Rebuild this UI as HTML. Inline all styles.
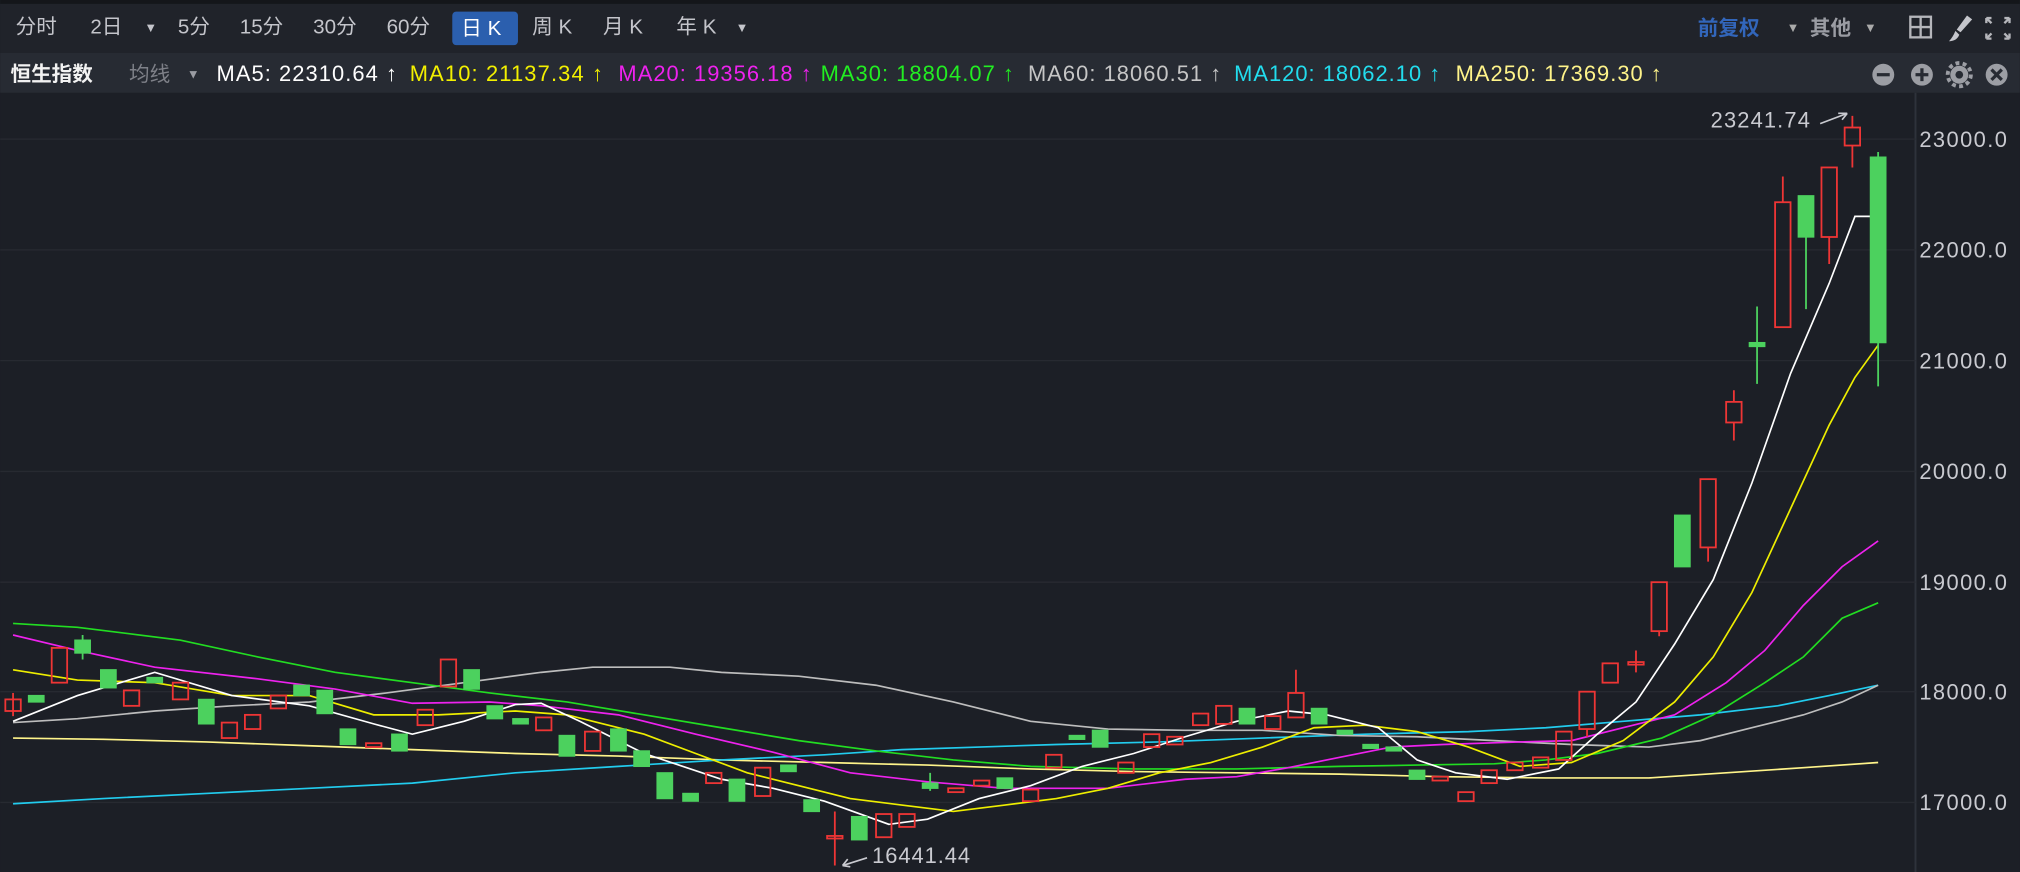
<!DOCTYPE html>
<html><head><meta charset="utf-8"><style>
html,body{margin:0;padding:0;background:#1c1f26;}
svg{display:block;font-family:"Liberation Sans","Noto Sans CJK SC",sans-serif;}
</style></head><body>
<svg width="2020" height="872" viewBox="0 0 1568 677" xmlns="http://www.w3.org/2000/svg">
<rect width="1568" height="677" fill="#1c1f26"/>
<rect width="1568" height="41" fill="#20232a"/>
<rect width="1568" height="3" fill="#14161a"/>
<rect y="41" width="1568" height="31" fill="#272b33"/>
<line x1="1487" y1="72" x2="1487" y2="677" stroke="#2e323b" stroke-width="1.5"/>
<g stroke="#272a31" stroke-width="1">
<line x1="0" y1="108" x2="1487" y2="108"/><line x1="0" y1="194" x2="1487" y2="194"/>
<line x1="0" y1="280" x2="1487" y2="280"/><line x1="0" y1="366" x2="1487" y2="366"/>
<line x1="0" y1="452" x2="1487" y2="452"/><line x1="0" y1="537" x2="1487" y2="537"/>
<line x1="0" y1="623" x2="1487" y2="623"/>
</g>
<g fill="#c9cad0" font-size="17">
<text x="1490" y="114" textLength="68">23000.0</text><text x="1490" y="200" textLength="68">22000.0</text>
<text x="1490" y="286" textLength="68">21000.0</text><text x="1490" y="372" textLength="68">20000.0</text>
<text x="1490" y="458" textLength="68">19000.0</text><text x="1490" y="543" textLength="68">18000.0</text>
<text x="1490" y="629" textLength="68">17000.0</text>
</g>
<!-- top bar -->
<g fill="#c4c5cb" font-size="16">
<text x="12" y="26">分时</text><text x="70" y="26">2日</text><text x="112" y="25" font-size="10">▼</text>
<text x="138" y="26">5分</text><text x="186" y="26">15分</text><text x="243" y="26">30分</text><text x="300" y="26">60分</text>
<rect x="351" y="9" width="51" height="26" rx="3" fill="#2b5fae"/>
<text x="358" y="27" fill="#fff">日 K</text>
<text x="413" y="26">周 K</text><text x="468" y="26">月 K</text><text x="525" y="26">年 K</text><text x="571" y="25" font-size="10">▼</text>
<text x="1318" y="27" fill="#3266bb" font-weight="bold">前复权</text><text x="1387" y="25" font-size="10" fill="#aaa">▼</text>
<text x="1405" y="27" fill="#9a9ca3" font-weight="bold">其他</text><text x="1447" y="25" font-size="10" fill="#aaa">▼</text>
</g>
<g stroke="#b5b6bb" fill="none" stroke-width="1.8">
<rect x="1483" y="13" width="16" height="16"/><line x1="1491" y1="13" x2="1491" y2="29"/><line x1="1483" y1="21" x2="1499" y2="21"/>
<path d="M1542 14l4 0M1542 14l0 4M1542 14l4 4M1560 14l-4 0M1560 14l0 4M1560 14l-4 4M1542 30l4 0M1542 30l0-4M1542 30l4-4M1560 30l-4 0M1560 30l0-4M1560 30l-4-4"/>
</g>
<path d="M1527 12 L1531 15 L1522 25 L1519 23 Z M1518 24 L1521 27 Q1519 32 1513 32 Q1516 29 1518 24Z" fill="#c4c5cb"/>
<!-- second bar -->
<g font-size="17">
<text x="8" y="63" fill="#f2f2f2" font-weight="bold" font-size="16">恒生指数</text>
<text x="100" y="63" fill="#7e8088" font-size="16">均线</text><text x="145" y="61" font-size="10" fill="#9a9ca3">▼</text>
<text x="168" y="63" fill="#ffffff" textLength="140">MA5: 22310.64 ↑</text>
<text x="318" y="63" fill="#f3f000" textLength="150">MA10: 21137.34 ↑</text>
<text x="480" y="63" fill="#ee22ee" textLength="150">MA20: 19356.18 ↑</text>
<text x="637" y="63" fill="#22ee22" textLength="150">MA30: 18804.07 ↑</text>
<text x="798" y="63" fill="#c6c6c6" textLength="150">MA60: 18060.51 ↑</text>
<text x="958" y="63" fill="#22ddee" textLength="160">MA120: 18062.10 ↑</text>
<text x="1130" y="63" fill="#fff48a" textLength="160">MA250: 17369.30 ↑</text>
</g>
<g fill="#9c9ea4">
<circle cx="1462" cy="58" r="8.5"/><circle cx="1492" cy="58" r="8.5"/><circle cx="1521" cy="58" r="7"/><circle cx="1550" cy="58" r="8.5"/>
</g>
<g stroke="#272b33" stroke-width="2.5">
<line x1="1457" y1="58" x2="1467" y2="58"/><line x1="1487" y1="58" x2="1497" y2="58"/><line x1="1492" y1="53" x2="1492" y2="63"/>
<line x1="1546" y1="54" x2="1554" y2="62"/><line x1="1554" y1="54" x2="1546" y2="62"/>
</g>
<circle cx="1521" cy="58" r="3" fill="#272b33"/>
<circle cx="1521" cy="58" r="9" fill="none" stroke="#9c9ea4" stroke-width="3" stroke-dasharray="3 2.6"/>
<!-- MA lines -->
<g fill="none" stroke-width="1.3">
<polyline stroke="#fff48a" points="10,573 80,574 160,576 240,579 320,582 400,585 480,587 560,590 640,592 720,594 800,597 880,599 960,600 1040,601 1120,603 1200,604 1280,604 1340,600 1400,596 1458,592"/>
<polyline stroke="#22ccee" points="10,624 80,620 160,616 240,612 320,608 400,600 480,595 560,590 640,586 700,582 760,580 820,578 900,576 980,573 1060,570 1140,568 1200,565 1260,560 1320,555 1380,548 1420,540 1458,532"/>
<polyline stroke="#bdbdbd" points="10,561 60,558 120,552 180,548 240,545 300,538 360,530 420,522 460,518 520,518 560,522 620,525 680,532 740,545 800,560 860,566 920,567 980,567 1040,571 1100,572 1160,575 1220,578 1280,580 1320,575 1360,565 1400,555 1430,545 1458,532"/>
<polyline stroke="#22dd22" points="10,484 60,487 140,497 200,510 260,522 320,530 380,538 440,545 500,555 560,565 620,575 680,583 740,590 800,595 880,597 960,597 1040,595 1100,594 1160,593 1200,590 1240,585 1290,573 1330,555 1370,530 1400,510 1430,480 1458,468"/>
<polyline stroke="#ee22ee" points="10,493 60,505 120,518 200,527 260,535 320,546 380,545 420,548 480,555 540,570 600,584 660,600 720,607 780,612 860,612 920,605 960,603 1000,596 1040,588 1080,580 1120,578 1180,576 1220,575 1260,565 1300,555 1340,530 1370,505 1400,470 1430,440 1458,420"/>
<polyline stroke="#eeee00" points="10,520 60,528 120,530 180,540 240,540 290,555 340,555 400,552 440,555 500,570 540,585 580,600 620,610 660,620 700,625 740,630 780,625 820,620 860,612 900,600 940,592 980,580 1020,565 1060,563 1100,568 1140,580 1180,595 1220,592 1260,575 1300,545 1330,510 1360,460 1390,395 1420,330 1440,293 1458,268"/>
<polyline stroke="#ffffff" points="10,560 60,540 120,522 180,540 240,548 290,562 320,570 360,560 400,547 420,546 450,560 500,585 560,605 600,612 640,622 690,640 720,636 760,620 800,610 840,595 880,585 920,572 960,560 1000,552 1030,555 1070,565 1100,590 1130,600 1170,605 1210,597 1240,570 1270,545 1300,500 1330,450 1360,375 1390,290 1420,220 1440,168 1458,168"/>
</g>
<!-- candles: red hollow -->
<g fill="none" stroke="#ee3535" stroke-width="1.4">
<path d="M10 538V556"/>
<rect x="4" y="543" width="12" height="9"/><rect x="40" y="503" width="12" height="27"/>
<rect x="96" y="536" width="12" height="12"/><rect x="134" y="530" width="12" height="13"/>
<rect x="172" y="561" width="12" height="12"/><rect x="190" y="555" width="12" height="11"/>
<rect x="210" y="540" width="12" height="10"/><rect x="284" y="577" width="12" height="3"/>
<rect x="324" y="551" width="12" height="12"/><rect x="342" y="512" width="12" height="21"/>
<rect x="416" y="557" width="12" height="10"/><rect x="454" y="568" width="12" height="15"/>
<rect x="548" y="600" width="12" height="8"/><rect x="586" y="596" width="12" height="22"/>
<rect x="642" y="649" width="12" height="2"/><rect x="680" y="632" width="12" height="18"/>
<rect x="698" y="632" width="12" height="10"/><rect x="736" y="612" width="12" height="3"/>
<rect x="756" y="606" width="12" height="4"/><rect x="794" y="613" width="12" height="9"/>
<rect x="812" y="586" width="12" height="10"/><rect x="868" y="592" width="12" height="8"/>
<rect x="888" y="570" width="12" height="10"/><rect x="906" y="572" width="12" height="6"/>
<rect x="926" y="554" width="12" height="9"/><rect x="944" y="548" width="12" height="14"/>
<rect x="982" y="556" width="12" height="10"/><rect x="1000" y="538" width="12" height="19"/>
<rect x="1112" y="603" width="12" height="3"/><rect x="1132" y="615" width="12" height="7"/>
<rect x="1150" y="598" width="12" height="10"/><rect x="1170" y="592" width="12" height="6"/>
<rect x="1190" y="588" width="12" height="8"/><rect x="1208" y="568" width="12" height="22"/>
<rect x="1226" y="537" width="12" height="29"/><rect x="1244" y="515" width="12" height="15"/>
<rect x="1264" y="514" width="12" height="2"/><rect x="1282" y="452" width="12" height="38"/>
<rect x="1320" y="372" width="12" height="53"/><rect x="1340" y="312" width="12" height="16"/>
<rect x="1378" y="157" width="12" height="97"/><rect x="1414" y="130" width="12" height="54"/>
<rect x="1432" y="99" width="12" height="14"/>
<path d="M648 630V672M1006 520V538M1346 303V312M1346 328V342M1384 137V157M1420 184V205M1438 90V99M1438 113V130M1288 490V494M1232 566V572M1326 425V436M1270 505V522"/>
</g>
<!-- green filled -->
<g fill="#4cd15e" stroke="#4cd15e" stroke-width="1">
<rect x="22" y="540" width="12" height="5"/><rect x="58" y="497" width="12" height="10"/>
<rect x="78" y="520" width="12" height="14"/><rect x="114" y="526" width="12" height="4"/>
<rect x="154" y="543" width="12" height="19"/><rect x="228" y="532" width="12" height="8"/>
<rect x="246" y="536" width="12" height="18"/><rect x="264" y="566" width="12" height="12"/>
<rect x="304" y="570" width="12" height="13"/><rect x="360" y="520" width="12" height="15"/>
<rect x="378" y="548" width="12" height="10"/><rect x="398" y="558" width="12" height="4"/>
<rect x="434" y="571" width="12" height="16"/><rect x="474" y="566" width="12" height="17"/>
<rect x="492" y="583" width="12" height="12"/><rect x="510" y="600" width="12" height="20"/>
<rect x="530" y="616" width="12" height="6"/><rect x="566" y="605" width="12" height="17"/>
<rect x="606" y="594" width="12" height="5"/><rect x="624" y="621" width="12" height="9"/>
<rect x="661" y="634" width="12" height="18"/><rect x="716" y="608" width="12" height="4"/>
<rect x="774" y="604" width="12" height="8"/><rect x="830" y="571" width="12" height="3"/>
<rect x="848" y="567" width="12" height="13"/><rect x="962" y="550" width="12" height="12"/>
<rect x="1018" y="550" width="12" height="12"/><rect x="1038" y="567" width="12" height="3"/>
<rect x="1058" y="578" width="12" height="3"/><rect x="1076" y="580" width="12" height="3"/>
<rect x="1094" y="598" width="12" height="7"/><rect x="1300" y="400" width="12" height="40"/>
<rect x="1358" y="266" width="12" height="3"/><rect x="1396" y="152" width="12" height="32"/>
<rect x="1452" y="122" width="12" height="144"/>
<path d="M1364 238V298M1402 184V240M1458 118V300M64 493V512M722 600V614" stroke-width="1.4" fill="none"/>
</g>
<!-- labels -->
<text x="1328" y="99" fill="#c9cad0" font-size="17" textLength="77">23241.74</text>
<path d="M1413 96L1434 88M1434 88l-7 0M1434 88l-4 5" stroke="#c9cad0" stroke-width="1.3" fill="none"/>
<text x="677" y="670" fill="#c9cad0" font-size="17" textLength="76">16441.44</text>
<path d="M673 666L654 672M654 672l6 1M654 672l4-5" stroke="#c9cad0" stroke-width="1.3" fill="none"/>
</svg>
</body></html>
